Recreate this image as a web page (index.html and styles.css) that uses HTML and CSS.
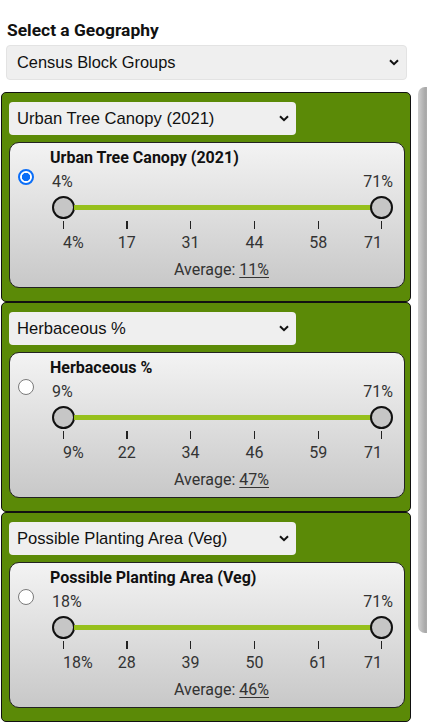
FILE: index.html
```html
<!DOCTYPE html>
<html lang="en">
<head>
<meta charset="utf-8">
<title>Select a Geography</title>
<link rel="stylesheet" href="styles.css">
</head>
<body>
<div class="page">
  <main class="sidebar">
    <h2 class="heading">Select a Geography</h2>
    <div class="select select-main">
      <span>Census Block Groups</span>
      <svg class="chev" width="10" height="7" viewBox="0 0 10 7"><path d="M1 1.2 L5 5.2 L9 1.2" fill="none" stroke="#111" stroke-width="2"/></svg>
    </div>

    <section class="panel">
      <div class="select select-inner">
        <span>Urban Tree Canopy (2021)</span>
        <svg class="chev" width="10" height="7" viewBox="0 0 10 7"><path d="M1 1.2 L5 5.2 L9 1.2" fill="none" stroke="#111" stroke-width="2"/></svg>
      </div>
      <div class="card">
        <span class="radio checked"></span>
        <div class="content">
          <div class="title">Urban Tree Canopy (2021)</div>
          <div class="range-labels"><span>4%</span><span>71%</span></div>
          <div class="slider"><span class="thumb"></span><span class="track"></span><span class="thumb"></span></div>
          <div class="grid">
            <div class="pip first"><i></i><span>4%</span></div>
            <div class="pip"><i></i><span>17</span></div>
            <div class="pip"><i></i><span>31</span></div>
            <div class="pip"><i></i><span>44</span></div>
            <div class="pip"><i></i><span>58</span></div>
            <div class="pip last"><i></i><span>71</span></div>
          </div>
          <div class="average">Average: <u>11%</u></div>
        </div>
      </div>
    </section>

    <section class="panel">
      <div class="select select-inner">
        <span>Herbaceous %</span>
        <svg class="chev" width="10" height="7" viewBox="0 0 10 7"><path d="M1 1.2 L5 5.2 L9 1.2" fill="none" stroke="#111" stroke-width="2"/></svg>
      </div>
      <div class="card">
        <span class="radio"></span>
        <div class="content">
          <div class="title">Herbaceous %</div>
          <div class="range-labels"><span>9%</span><span>71%</span></div>
          <div class="slider"><span class="thumb"></span><span class="track"></span><span class="thumb"></span></div>
          <div class="grid">
            <div class="pip first"><i></i><span>9%</span></div>
            <div class="pip"><i></i><span>22</span></div>
            <div class="pip"><i></i><span>34</span></div>
            <div class="pip"><i></i><span>46</span></div>
            <div class="pip"><i></i><span>59</span></div>
            <div class="pip last"><i></i><span>71</span></div>
          </div>
          <div class="average">Average: <u>47%</u></div>
        </div>
      </div>
    </section>

    <section class="panel">
      <div class="select select-inner">
        <span>Possible Planting Area (Veg)</span>
        <svg class="chev" width="10" height="7" viewBox="0 0 10 7"><path d="M1 1.2 L5 5.2 L9 1.2" fill="none" stroke="#111" stroke-width="2"/></svg>
      </div>
      <div class="card">
        <span class="radio"></span>
        <div class="content">
          <div class="title">Possible Planting Area (Veg)</div>
          <div class="range-labels"><span>18%</span><span>71%</span></div>
          <div class="slider"><span class="thumb"></span><span class="track"></span><span class="thumb"></span></div>
          <div class="grid">
            <div class="pip first"><i></i><span>18%</span></div>
            <div class="pip"><i></i><span>28</span></div>
            <div class="pip"><i></i><span>39</span></div>
            <div class="pip"><i></i><span>50</span></div>
            <div class="pip"><i></i><span>61</span></div>
            <div class="pip last"><i></i><span>71</span></div>
          </div>
          <div class="average">Average: <u>46%</u></div>
        </div>
      </div>
    </section>
  </main>
  <div class="scrollbar"></div>
</div>
</body>
</html>
```

FILE: styles.css
```css
html, body {
  margin: 0;
  padding: 0;
  background: #fff;
}
body {
  font-family: Roboto, "Liberation Sans", Arial, sans-serif;
  color: #222;
  overflow: hidden;
}
.page {
  display: flex;
  align-items: flex-start;
}
.sidebar {
  width: 412px;
  flex: none;
  display: flex;
  flex-direction: column;
}
.heading {
  margin: 20px 0 0 7px;
  font-size: 17.4px;
  line-height: 20px;
  font-weight: 700;
  color: #111;
}
.select {
  display: flex;
  align-items: center;
  justify-content: space-between;
  box-sizing: border-box;
  background: #efefef;
  border-radius: 4px;
  font-family: "Liberation Sans", Arial, sans-serif;
  font-size: 16.6px;
  color: #111;
}
.select-main {
  margin: 5px 0 0 6px;
  width: 401px;
  height: 35px;
  padding: 0 7px 0 10px;
  border: 1px solid #e3e3e3;
  font-size: 16.4px;
}
.select-inner {
  width: 287px;
  height: 33px;
  padding: 0 7px 0 8px;
}
.chev {
  flex: none;
}
.panel {
  box-sizing: border-box;
  margin-left: 1px;
  width: 410px;
  height: 210px;
  background: #5b8a07;
  border: 1px solid #111;
  border-radius: 5px;
  padding: 9px 5px 0 7px;
  display: flex;
  flex-direction: column;
}
.select-main + .panel {
  margin-top: 12px;
}
.card {
  margin-top: 7px;
  box-sizing: border-box;
  height: 146px;
  border: 1px solid #222;
  border-radius: 10px;
  background: linear-gradient(#f3f3f3, #c8c8c8);
  display: flex;
  align-items: flex-start;
  padding: 6px 11px 8px 8px;
}
.radio {
  flex: none;
  box-sizing: border-box;
  width: 16px;
  height: 16px;
  margin-top: 20px;
  border-radius: 50%;
  background: #fff;
  border: 1px solid #7a7a7a;
}
.radio.checked {
  border: 2px solid #0b6ef7;
  background: radial-gradient(circle, #0b6ef7 0 3.8px, #fff 4.5px);
}
.content {
  flex: 1;
  margin-left: 16px;
  display: flex;
  flex-direction: column;
  color: #333;
}
.title {
  font-size: 16px;
  line-height: 18px;
  font-weight: 700;
  color: #111;
}
.range-labels {
  margin: 6px 0 0 2px;
  display: flex;
  justify-content: space-between;
  font-size: 16px;
  line-height: 18px;
}
.slider {
  margin: 4px 0 0 2px;
  height: 24px;
  display: flex;
  align-items: center;
}
.thumb {
  flex: none;
  box-sizing: border-box;
  width: 23px;
  height: 23px;
  border-radius: 50%;
  background: #c6c6c6;
  border: 2px solid #111;
}
.track {
  flex: 1;
  height: 5px;
  background: #97c01c;
  margin: 0 -1px;
}
.grid {
  margin: 2px 11px 0 13px;
  display: flex;
  justify-content: space-between;
}
.pip {
  width: 0;
  display: flex;
  flex-direction: column;
  align-items: center;
}
.pip i {
  display: block;
  width: 1.4px;
  height: 8px;
  background: #222;
}
.pip span {
  margin-top: 5px;
  font-size: 16px;
  line-height: 18px;
  white-space: nowrap;
}
.pip.first {
  align-items: flex-start;
}
.pip.last {
  align-items: flex-end;
}
.average {
  margin-top: 9px;
  text-align: center;
  font-size: 16px;
  line-height: 18px;
}
.average u {
  text-underline-offset: 2px;
}
.scrollbar {
  flex: none;
  margin: 87px 0 0 6px;
  width: 12px;
  height: 546px;
  border-radius: 7px 0 0 7px;
  background: linear-gradient(to right, #cfcfcf, #a9a9a9 60%, #b3b3b3);
}
```
